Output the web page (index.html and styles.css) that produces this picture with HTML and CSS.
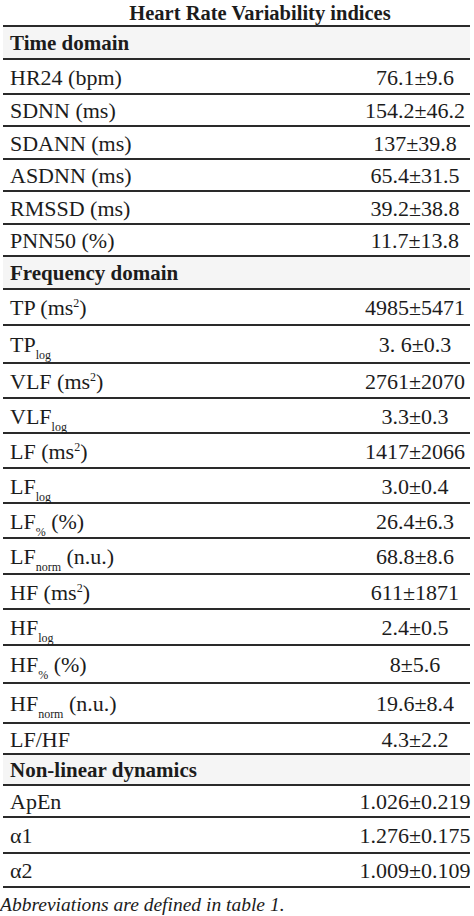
FILE: index.html
```html
<!DOCTYPE html>
<html>
<head>
<meta charset="utf-8">
<link rel="stylesheet" href="styles.css">
</head>
<body>
<div class="tbl">
  <div class="row title h27"><span>Heart Rate Variability indices</span></div>
  <div class="row section h33"><span class="lbl">Time domain</span></div>
  <div class="row h35"><span class="lbl">HR24 (bpm)</span><span class="val">76.1±9.6</span></div>
  <div class="row h32"><span class="lbl">SDNN (ms)</span><span class="val">154.2±46.2</span></div>
  <div class="row h33"><span class="lbl">SDANN (ms)</span><span class="val">137±39.8</span></div>
  <div class="row h32"><span class="lbl">ASDNN (ms)</span><span class="val">65.4±31.5</span></div>
  <div class="row h33"><span class="lbl">RMSSD (ms)</span><span class="val">39.2±38.8</span></div>
  <div class="row h32"><span class="lbl">PNN50 (%)</span><span class="val">11.7±13.8</span></div>
  <div class="row section h33"><span class="lbl">Frequency domain</span></div>
  <div class="row h36"><span class="lbl">TP (ms<sup class="sup">2</sup>)</span><span class="val">4985±5471</span></div>
  <div class="row h38"><span class="lbl">TP<sub class="sub">log</sub></span><span class="val">3. 6±0.3</span></div>
  <div class="row h35"><span class="lbl">VLF (ms<sup class="sup">2</sup>)</span><span class="val">2761±2070</span></div>
  <div class="row h35"><span class="lbl">VLF<sub class="sub">log</sub></span><span class="val">3.3±0.3</span></div>
  <div class="row h35"><span class="lbl">LF (ms<sup class="sup">2</sup>)</span><span class="val">1417±2066</span></div>
  <div class="row h35"><span class="lbl">LF<sub class="sub">log</sub></span><span class="val">3.0±0.4</span></div>
  <div class="row h35"><span class="lbl">LF<sub class="sub">%</sub> (%)</span><span class="val">26.4±6.3</span></div>
  <div class="row h36"><span class="lbl">LF<sub class="sub">norm</sub> (n.u.)</span><span class="val">68.8±8.6</span></div>
  <div class="row h35"><span class="lbl">HF (ms<sup class="sup">2</sup>)</span><span class="val">611±1871</span></div>
  <div class="row h36"><span class="lbl">HF<sub class="sub">log</sub></span><span class="val">2.4±0.5</span></div>
  <div class="row h38"><span class="lbl">HF<sub class="sub">%</sub> (%)</span><span class="val">8±5.6</span></div>
  <div class="row h40"><span class="lbl">HF<sub class="sub">norm</sub> (n.u.)</span><span class="val">19.6±8.4</span></div>
  <div class="row h31"><span class="lbl">LF/HF</span><span class="val">4.3±2.2</span></div>
  <div class="row section h31"><span class="lbl">Non-linear dynamics</span></div>
  <div class="row h32"><span class="lbl">ApEn</span><span class="val">1.026±0.219</span></div>
  <div class="row h36"><span class="lbl">α1</span><span class="val">1.276±0.175</span></div>
  <div class="row h34"><span class="lbl">α2</span><span class="val">1.009±0.109</span></div>
</div>
<p class="note">Abbreviations are defined in table 1.</p>
</body>
</html>
```
FILE: styles.css
```css
html, body {
  margin: 0;
  padding: 0;
  background: #ffffff;
}
body {
  width: 474px;
  height: 916px;
  overflow: hidden;
  font-family: "Liberation Serif", "Times New Roman", serif;
  color: #1c1c1c;
}
.tbl {
  margin-left: 3px;
  width: 467px;
}
.row {
  box-sizing: border-box;
  display: flex;
  align-items: center;
  border-bottom: 2px solid #2a2a2a;
  font-size: 22px;
  white-space: nowrap;
}
.title {
  justify-content: center;
  align-items: flex-start;
  padding-left: 47px;
  padding-top: 3px;
  font-weight: bold;
  font-size: 20.5px;
  line-height: 20px;
}
.section {
  background: #f5f5f5;
  font-weight: bold;
  font-size: 21px;
}
.lbl {
  flex: 1;
  padding-left: 7px;
  padding-top: 2px;
}
.val {
  box-sizing: border-box;
  display: flex;
  justify-content: center;
  width: 104px;
  padding-right: 6px;
  padding-top: 2px;
}
.sub {
  font-size: 12px;
  vertical-align: -7px;
  line-height: 0;
}
.sup {
  font-size: 12px;
  vertical-align: 8px;
  line-height: 0;
}
.note {
  margin: 0;
  padding-top: 6px;
  font-style: italic;
  font-size: 19.5px;
  line-height: 22px;
}
.h27 { height: 27px; }
.h31 { height: 31px; }
.h32 { height: 32px; }
.h33 { height: 33px; }
.h34 { height: 34px; }
.h35 { height: 35px; }
.h36 { height: 36px; }
.h38 { height: 38px; }
.h40 { height: 40px; }
```
